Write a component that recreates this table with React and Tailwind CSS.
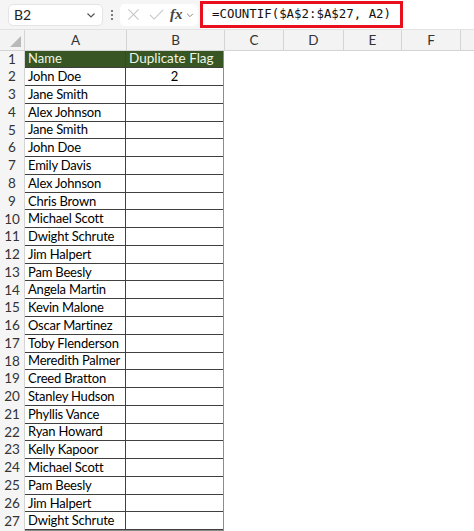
import React from "react";

const names = [
  "John Doe","Jane Smith","Alex Johnson","Jane Smith","John Doe","Emily Davis","Alex Johnson","Chris Brown","Michael Scott","Dwight Schrute","Jim Halpert","Pam Beesly","Angela Martin","Kevin Malone","Oscar Martinez","Toby Flenderson","Meredith Palmer","Creed Bratton","Stanley Hudson","Phyllis Vance","Ryan Howard","Kelly Kapoor","Michael Scott","Pam Beesly","Jim Halpert","Dwight Schrute",
];

const cols = [
  { l: "C", w: "w-[59px]" },
  { l: "D", w: "w-[60px]" },
  { l: "E", w: "w-[58px]" },
  { l: "F", w: "w-[59px]" },
];

function Chevron({ className }) {
  return (
    <svg viewBox="0 0 12 12" className={className} fill="none" stroke="currentColor" strokeWidth="1.2">
      <path d="M2.5 4.5 L6 8 L9.5 4.5" />
    </svg>
  );
}

export default function App() {
  return (
    <div className="w-[474px] h-[531px] overflow-hidden bg-white font-['Lato','Noto_Sans',sans-serif] text-[13.5px] text-black">
      {/* toolbar */}
      <div className="h-[30px] bg-[#f5f5f5] flex items-center border-b border-[#e2e2e2]">
        <div className="ml-[8px] w-[95px] h-[22px] bg-white rounded-[5px] border border-[#e4e4e4] flex items-center justify-between pl-[5px] pr-[5px]">
          <span className="text-[14px] text-[#222]">B2</span>
          <Chevron className="w-[12px] h-[12px] text-[#555]" />
        </div>
        <div className="w-[17px] flex flex-col items-center gap-[2px]">
          <div className="w-[2px] h-[2px] bg-[#555] rounded-full" />
          <div className="w-[2px] h-[2px] bg-[#555] rounded-full" />
          <div className="w-[2px] h-[2px] bg-[#555] rounded-full" />
        </div>
        <div className="w-[78px] h-[22px] bg-white rounded-[5px] flex items-center pl-[7px]">
          <svg viewBox="0 0 14 14" className="w-[13px] h-[13px]" fill="none" stroke="#c4c4c4" strokeWidth="1.1">
            <path d="M1.5 1.5 L12.5 12.5 M12.5 1.5 L1.5 12.5" />
          </svg>
          <svg viewBox="0 0 16 14" className="ml-[9px] w-[15px] h-[13px]" fill="none" stroke="#c4c4c4" strokeWidth="1.1">
            <path d="M1 7.5 L5.5 12 L15 2" />
          </svg>
          <span className="ml-[6px] font-['Liberation_Serif',serif] italic font-bold text-[15px] leading-none text-[#444]">fx</span>
          <Chevron className="ml-[2px] w-[10px] h-[10px] text-[#888]" />
        </div>
        <div className="ml-[2px] self-stretch flex-1 bg-white flex items-center">
          <div className="h-[27px] w-[203px] border-[3px] border-[#e8101c] flex items-center pl-[9px] font-['DejaVu_Sans_Mono',monospace] text-[12.4px] text-[#111]">
            =COUNTIF($A$2:$A$27, A2)
          </div>
        </div>
      </div>

      {/* column headers */}
      <div className="flex h-[20.5px] bg-[#f3f3f3] border-b border-[#d4d4d4] text-[#333]">
        <div className="w-[25px] border-r border-[#d4d4d4] relative">
          <svg viewBox="0 0 10 10" className="absolute right-[3px] bottom-[3px] w-[11px] h-[11px]">
            <polygon points="10,0 10,10 0,10" fill="#b9b9b9" />
          </svg>
        </div>
        <div className="w-[102px] border-r border-[#d4d4d4] flex items-center justify-center">A</div>
        <div className="w-[98px] border-r border-[#d4d4d4] flex items-center justify-center">B</div>
        {cols.map((c) => (
          <div key={c.l} className={`${c.w} border-r border-[#d4d4d4] flex items-center justify-center`}>{c.l}</div>
        ))}
        <div className="flex-1" />
      </div>

      {/* rows */}
      <div className="flex">
        <div className="w-[25px] bg-[#f5f5f5] border-r border-[#d4d4d4] text-[#333]">
          {Array.from({ length: 27 }, (_, i) => (
            <div key={i} className="h-[17.78px] flex items-center justify-center leading-none">{i + 1}</div>
          ))}
        </div>
        <div className="border-r-[1.5px] border-b-[1.5px] border-[#8c8c8c] text-[13px]">
          <div className="flex h-[17.78px] bg-[#375623] text-[#eef5e6] border-b border-[#404040]">
            <div className="w-[101px] border-r border-[#404040] pl-[3px] flex items-center leading-none">Name</div>
            <div className="w-[97px] pl-[3px] flex items-center leading-none text-[13.5px]">Duplicate Flag</div>
          </div>
          {names.map((n, i) => (
            <div key={i} className="flex h-[17.78px] border-b border-[#404040]">
              <div className="w-[101px] border-r border-[#404040] pl-[3px] flex items-center leading-none whitespace-nowrap tracking-[-0.2px]">{n}</div>
              <div className="w-[97px] flex items-center justify-center leading-none">{i === 0 ? "2" : ""}</div>
            </div>
          ))}
        </div>
        <div className="flex-1" />
      </div>
    </div>
  );
}
